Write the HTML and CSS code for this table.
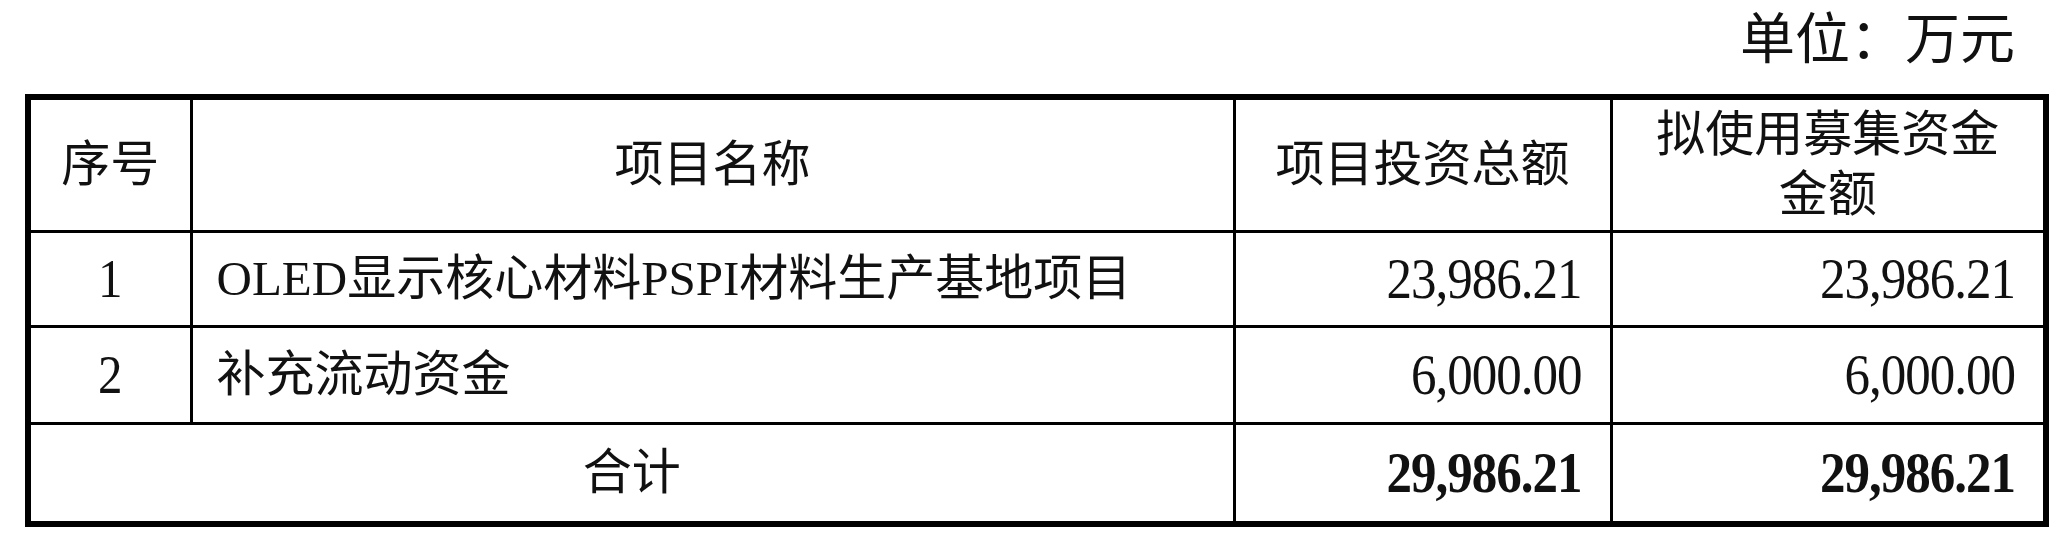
FILE: index.html
```html
<!DOCTYPE html>
<html lang="zh-CN">
<head>
<meta charset="utf-8">
<link rel="stylesheet" href="styles.css">
</head>
<body>
<div class="page">
  <div class="unit">单位：万元</div>
  <table class="tbl">
    <colgroup>
      <col class="c1"><col class="c2"><col class="c3"><col class="c4">
    </colgroup>
    <tr class="head">
      <td class="center">序号</td>
      <td class="center">项目名称</td>
      <td class="center">项目投资总额</td>
      <td class="center two">拟使用募集资金<br>金额</td>
    </tr>
    <tr class="r1">
      <td class="center num"><span class="tall">1</span></td>
      <td class="name">OLED显示核心材料PSPI材料生产基地项目</td>
      <td class="amt"><span class="tall">23,986.21</span></td>
      <td class="amt"><span class="tall">23,986.21</span></td>
    </tr>
    <tr class="r2">
      <td class="center num"><span class="tall">2</span></td>
      <td class="name">补充流动资金</td>
      <td class="amt"><span class="tall">6,000.00</span></td>
      <td class="amt"><span class="tall">6,000.00</span></td>
    </tr>
    <tr class="r3">
      <td class="center" colspan="2">合计</td>
      <td class="amt bold"><span class="tall">29,986.21</span></td>
      <td class="amt bold"><span class="tall">29,986.21</span></td>
    </tr>
  </table>
</div>
</body>
</html>
```
FILE: styles.css
```css
html, body {
  margin: 0;
  padding: 0;
  background: #ffffff;
}
body {
  font-family: "Liberation Serif", "Noto Sans CJK SC", serif;
  color: #111111;
}
.page {
  width: 2060px;
  height: 538px;
  padding-left: 25px;
  box-sizing: border-box;
}
.unit {
  height: 94px;
  width: 1990px;
  text-align: right;
  font-size: 55px;
  line-height: 80px;
  box-sizing: border-box;
}
.tbl {
  border-collapse: collapse;
  border: 6px solid #000;
  width: 2018px;
  table-layout: fixed;
}
.c1 { width: 163px; }
.c2 { width: 1043px; }
.c3 { width: 377px; }
.c4 { width: 435px; }
.tbl td {
  border: 3px solid #000;
  font-size: 49px;
  line-height: 60px;
  padding: 0 24px;
  vertical-align: middle;
  white-space: nowrap;
}
.head td { height: 130px; }
.r1 td { height: 92px; }
.r2 td { height: 94px; }
.r3 td { height: 96px; }
.center { text-align: center; }
.tbl td.center { padding: 0; }
.name { text-align: left; }
.amt {
  text-align: right;
  letter-spacing: -1px;
}
.tbl td.amt { padding-right: 28px; font-size: 51px; }
.num { font-size: 50px; }
.bold { font-weight: bold; }
.tall {
  display: inline-block;
  transform: scaleY(1.12);
}
```
